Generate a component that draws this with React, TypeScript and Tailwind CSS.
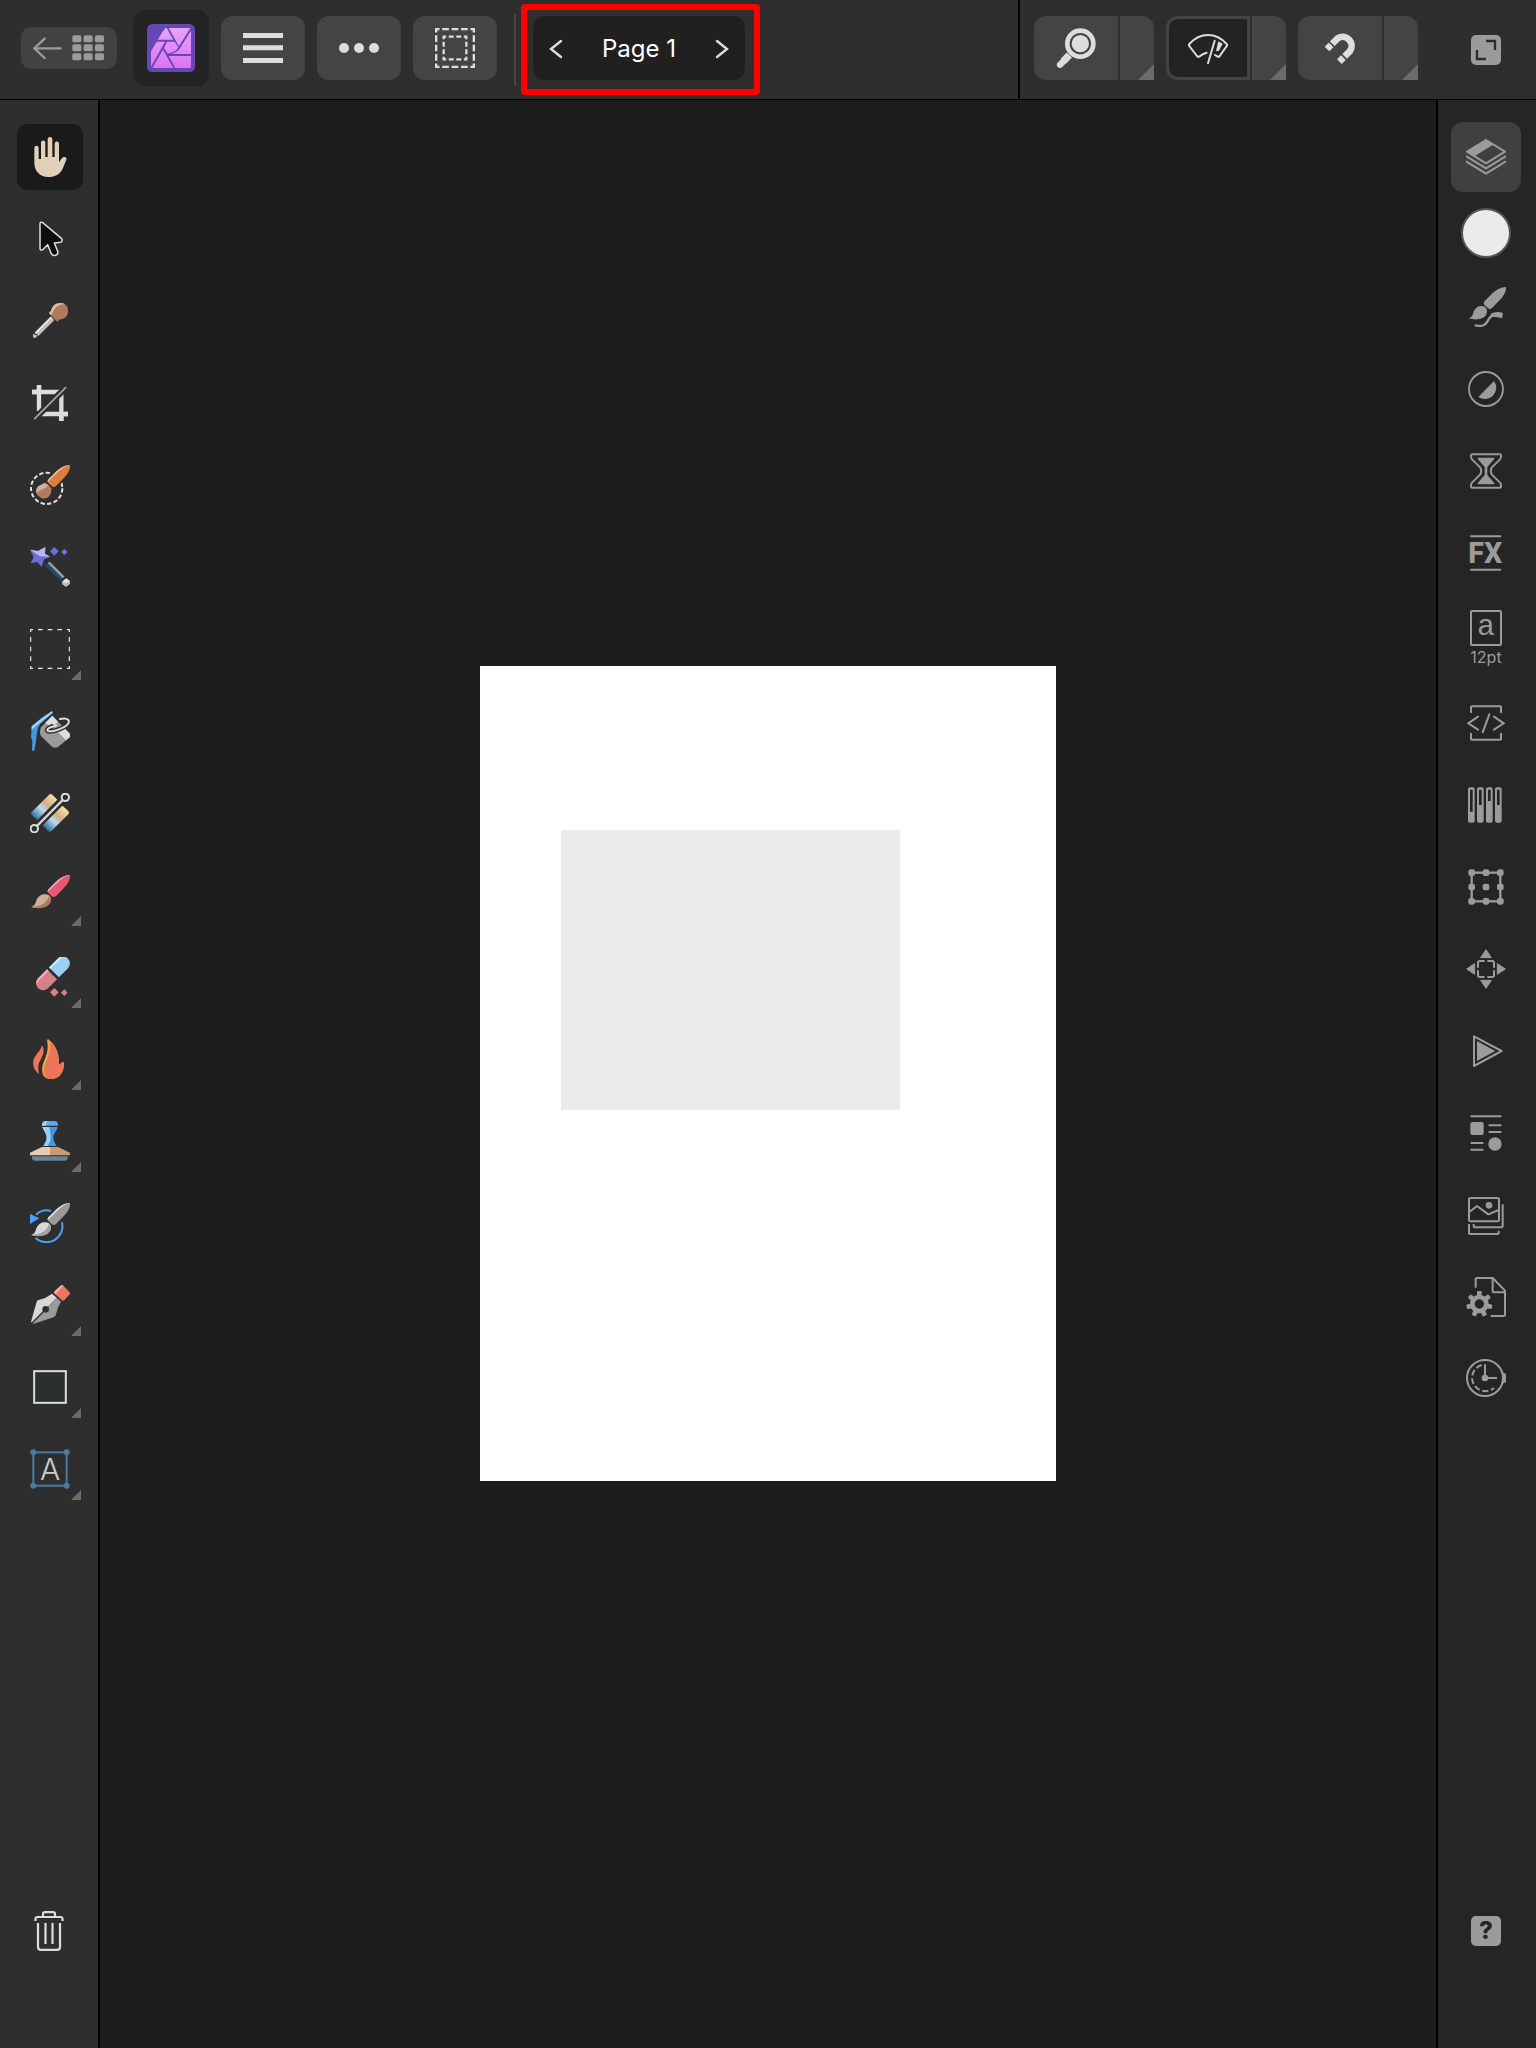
import { useState, type ReactNode } from 'react';
import clsx from 'clsx';

interface IconItem {
  id: string;
  label: string;
  icon: ReactNode;
  more?: boolean;
}

// all icons are drawn on a 120 unit grid and shown at 40px
function Icon({ children, className = 'w-10 h-10' }: { children: ReactNode; className?: string }) {
  return (
    <svg viewBox="0 0 120 120" className={className} fill="none" aria-hidden="true">
      {children}
    </svg>
  );
}

const HANDLE = 'M120 0C105 0 90 8 72 26L56 42Q50 49 56 55L66 64Q72 69 78 63L98 43C114 27 121 14 120 0Z';
const HANDLE_LIGHT = 'M120 0C105 0 90 8 72 26L56 42Q51 47 53 52L76 29C92 13 104 4 120 0Z';
const BRISTLE = 'M5 95Q15 92 17 82Q22 62 40 58Q56 55 62 67Q65 84 50 94Q32 103 5 97Z';

const TOOLS: IconItem[] = [
  {
    id: 'hand',
    label: 'View tool',
    icon: (
      <Icon>
        <path
          fill="#e3cfb9"
          d="M13 33a6.5 6.5 0 0 1 13 0V66h7V17a6.5 6.5 0 0 1 13 0V60h7V7a7 7 0 0 1 14 0V60h7V20a6.5 6.5 0 0 1 13 0V76l9-12c5-7 16-4 13 4L98 95c-8 16-22 25-43 25C30 120 13 104 13 76Z"
        />
      </Icon>
    ),
  },
  {
    id: 'move',
    label: 'Move tool',
    icon: (
      <Icon>
        <path
          fill="#0d0d0d"
          stroke="#dddddd"
          strokeWidth="4.5"
          strokeLinejoin="round"
          d="M38 11Q31 7 30 14V88Q31 96 38 92L53 77L64 104Q68 112 77 109Q86 105 83 97L73 72L92 70Q99 66 95 59Z"
        />
      </Icon>
    ),
  },
  {
    id: 'picker',
    label: 'Colour picker',
    icon: (
      <Icon>
        <path stroke="#bdbdbd" strokeWidth="15" d="M68 52L20 100" />
        <path stroke="#e6e6e6" strokeWidth="6" d="M64 49L16 97" />
        <path fill="#bdbdbd" d="M9 98L23 104L17 110Q12 113 9 108Z" />
        <path fill="#b07a5e" d="M58 38Q57 32 63 30Q68 8 88 6C104 4 116 16 114 32C113 46 104 54 90 55L82 62Z" />
        <path fill="#e0bda9" d="M58 38Q57 32 63 30Q68 8 88 6Q98 5 105 10Q84 10 76 22Q68 30 68 36L62 42Z" />
      </Icon>
    ),
  },
  {
    id: 'crop',
    label: 'Crop tool',
    icon: (
      <Icon>
        <path stroke="#dddddd" strokeWidth="13" d="M27 6V84M6 27H90M94 30V114M30 93H114" />
        <path stroke="#2e2e2e" strokeWidth="19" d="M8 113L113 8" />
        <path stroke="#dddddd" strokeWidth="13" d="M6 27H32M27 6V32M94 88V114M88 93H114" />
        <path stroke="#a6a6a6" strokeWidth="5" strokeLinecap="round" d="M14 107L107 14" />
      </Icon>
    ),
  },
  {
    id: 'selection-brush',
    label: 'Selection brush',
    icon: (
      <Icon>
        <circle cx="50" cy="70" r="47" stroke="#e2e2e2" strokeWidth="6" strokeDasharray="13 6.7" />
        <path stroke="#2e2e2e" strokeWidth="10" fill="#2e2e2e" d={HANDLE} />
        <path fill="#d97f42" d={HANDLE} />
        <path fill="#f3bb94" d={HANDLE_LIGHT} />
        <path fill="#b07a5e" d="M44 54Q57 58 65 71L62 86Q54 104 36 100Q18 92 18 78Q18 66 28 62Z" />
        <path fill="#cfae9c" d="M44 54L54 59Q52 68 38 73Q24 78 20 86Q16 68 28 62Z" />
      </Icon>
    ),
  },
  {
    id: 'wand',
    label: 'Flood select',
    icon: (
      <Icon>
        <path fill="#6a70d8" d="M46 0L45 20L60 29L42 37L35 60L22 45L2 49L11 30L0 8L24 12Z" />
        <path fill="#b6b8ef" d="M46 0L45 20L60 29L30 28L0 8L24 12Z" />
        <path fill="#6a70d8" d="M73 0L86 13L73 26L60 13ZM103 5L113 15L103 25L93 15Z" />
        <path stroke="#28495b" strokeWidth="16" d="M51 50L97 96" />
        <path stroke="#8fa1ab" strokeWidth="7" d="M56 46L101 91" />
        <path fill="#e4e4e4" d="M108 94L118 100Q121 108 118 112L108 119L98 112Q95 106 98 103Z" />
        <path fill="#bcbcbc" d="M97 104L108 108L118 101Q121 108 118 112L108 119L98 112Z" />
      </Icon>
    ),
  },
  {
    id: 'marquee',
    label: 'Rectangular marquee',
    more: true,
    icon: (
      <Icon>
        <rect x="2" y="2" width="116" height="116" stroke="#e8e8e8" strokeWidth="3.5" strokeDasharray="14 15" strokeDashoffset="7" />
      </Icon>
    ),
  },
  {
    id: 'fill',
    label: 'Flood fill',
    icon: (
      <Icon>
        <path fill="#4596dc" d="M66 1L68 5L30 40Q22 50 21 66L14 117Q10 122 6 118L7 88L3 80L5 46Z" />
        <path fill="#9ad0f4" d="M66 0L68 6L30 36L10 52L5 58V46L36 20Z" />
        <path fill="#9b9b9b" d="M67 14L120 70V78L84 108Q75 113 66 107L33 75Q29 70 30 62L32 50Z" />
        <path fill="#dddddd" d="M67 14L84 32L65 51L46 35ZM98 46L120 68V78L108 88L83 62Z" />
        <path stroke="#2e2e2e" strokeWidth="14" strokeLinecap="round" d="M66 46C44 54 48 66 74 59C104 51 122 38 115 27C109 20 98 22 90 24" />
        <path stroke="#dddddd" strokeWidth="6" strokeLinecap="round" d="M78 44C40 52 48 66 74 59C104 51 122 38 115 27C109 20 98 22 90 24" />
      </Icon>
    ),
  },
  {
    id: 'gradient',
    label: 'Gradient tool',
    icon: (
      <Icon>
        <defs>
          <linearGradient id="grad-a" x1="72" y1="10" x2="12" y2="72" gradientUnits="userSpaceOnUse">
            <stop offset="0" stopColor="#f0e4a2" />
            <stop offset=".38" stopColor="#d8ab8a" />
            <stop offset=".62" stopColor="#b6dcf4" />
            <stop offset="1" stopColor="#3a7092" />
          </linearGradient>
          <linearGradient id="grad-b" x1="107" y1="48" x2="48" y2="106" gradientUnits="userSpaceOnUse">
            <stop offset="0" stopColor="#f0e4a2" />
            <stop offset=".38" stopColor="#d8ab8a" />
            <stop offset=".62" stopColor="#b6dcf4" />
            <stop offset="1" stopColor="#3a7092" />
          </linearGradient>
        </defs>
        <path fill="url(#grad-a)" d="M59 4Q63 1 67 5L82 20L22 81L5 65Q1 61 5 57Z" />
        <path fill="url(#grad-b)" d="M97 38L115 54Q119 59 115 64L64 114Q59 119 54 114L38 97Z" />
        <path stroke="#dddddd" strokeWidth="7" d="M21 99L98 21" />
        <circle cx="106" cy="13" r="11" stroke="#dddddd" strokeWidth="6" />
        <circle cx="13" cy="107" r="11" stroke="#dddddd" strokeWidth="6" />
      </Icon>
    ),
  },
  {
    id: 'brush',
    label: 'Paint brush',
    more: true,
    icon: (
      <Icon>
        <path fill="#e95873" d={HANDLE} />
        <path fill="#f4a6b2" d={HANDLE_LIGHT} />
        <path fill="#cfae9c" d={BRISTLE} />
        <path fill="#b07a5e" d="M5 95Q48 94 57 62Q62 64 63 74Q62 86 50 94Q32 103 5 97Z" />
      </Icon>
    ),
  },
  {
    id: 'erase',
    label: 'Erase brush',
    more: true,
    icon: (
      <Icon>
        <g transform="translate(69 49) rotate(-45)">
          <path fill="#9bcff5" d="M4 -21H42A21 21 0 0 1 42 21H4Z" />
          <path fill="#d3edfd" d="M4 -21H42Q54 -20 60 -12Q54 -15 44 -15H4Z" />
          <path fill="#d97f87" d="M-4 -21H-42A21 21 0 0 0 -42 21H-4Z" />
          <path fill="#f0b5ba" d="M-4 -21H-42Q-54 -20 -60 -12Q-54 -15 -44 -15H-4Z" />
        </g>
        <path fill="#d97f87" d="M73 93L86 106L73 119L60 106ZM103 97L113 107L103 117L93 107Z" />
      </Icon>
    ),
  },
  {
    id: 'burn',
    label: 'Burn brush',
    more: true,
    icon: (
      <Icon>
        <path fill="#ee745c" d="M38 21C48 44 30 60 26 76C23 88 27 96 26 105C12 92 8 80 10 66C14 46 30 40 35 22Z" />
        <path fill="#f0a24a" d="M54 0C70 12 88 32 87 76C92 76 92 70 102 69C103 98 90 120 62 120C40 120 34 104 37 82C42 60 59 40 51 4Z" />
        <path fill="#ee745c" d="M60 5C76 20 88 40 87 76C92 76 92 70 102 69C103 98 90 120 62 120C46 119 40 104 43 84C48 62 66 40 60 5Z" />
      </Icon>
    ),
  },
  {
    id: 'clone',
    label: 'Clone brush',
    more: true,
    icon: (
      <Icon>
        <path fill="#54adf2" d="M36 14V8Q38 0 46 0H74Q82 0 84 8V14Z" />
        <path fill="#4596dc" d="M37 18H83C82 28 70 38 70 50C70 60 76 66 80 75H40C44 66 50 60 50 50C50 38 40 28 37 18Z" />
        <path fill="#9ad0f4" d="M37 18H58C60 30 62 38 62 50C62 60 58 66 52 75H40C44 66 50 60 50 50C50 38 40 28 37 18ZM36 14V8Q38 0 46 0L52 1L48 14Z" />
        <path fill="#e5cbb2" d="M36 78H60V103H0V95Z" />
        <path fill="#c89c72" d="M60 78H84L120 95V103H60Z" />
        <path fill="#66859a" d="M6 106H113V112Q112 119 105 119H14Q7 119 6 112Z" />
      </Icon>
    ),
  },
  {
    id: 'undo-brush',
    label: 'Undo brush',
    icon: (
      <Icon>
        <path stroke="#4ba0f5" strokeWidth="6" d="M63 24A48 48 0 0 0 18 35M96 58A48 48 0 0 1 16 104" />
        <path fill="#4ba0f5" d="M0 33L28 46L0 63Z" />
        <path fill="#999999" d={HANDLE} />
        <path fill="#dddddd" d={HANDLE_LIGHT} />
        <path fill="#d8d8d8" d={BRISTLE} />
        <path fill="#a2a2a2" d="M5 95Q48 94 57 62Q62 64 63 74Q62 86 50 94Q32 103 5 97Z" />
      </Icon>
    ),
  },
  {
    id: 'pen',
    label: 'Pen tool',
    more: true,
    icon: (
      <Icon>
        <path fill="#d8d8d8" d="M3 110L20 50Q21 46 26 45Q48 40 66 26L80 38L6 113Z" />
        <path fill="#9b9b9b" d="M80 38L93 50Q82 68 78 88Q77 94 71 97L9 117L6 113Z" />
        <path stroke="#2e2e2e" strokeWidth="4" d="M4 116L47 73" />
        <circle cx="47" cy="73" r="10" fill="#2e2e2e" />
        <path fill="#ef745f" d="M92 2Q96 -2 100 2L118 21Q122 25 118 29L103 45Q99 49 95 45L74 26Q71 22 74 19Z" />
        <path fill="#f7b3a6" d="M92 2Q96 -2 100 2L77 28L74 26Q71 22 74 19Z" />
      </Icon>
    ),
  },
  {
    id: 'rectangle',
    label: 'Rectangle tool',
    more: true,
    icon: (
      <Icon>
        <rect x="12.5" y="12.5" width="95" height="95" fill="#2a302f" stroke="#dddddd" strokeWidth="6" />
      </Icon>
    ),
  },
  {
    id: 'text',
    label: 'Frame text tool',
    more: true,
    icon: (
      <Icon>
        <rect x="10" y="10" width="100" height="100" stroke="#4a7ba1" strokeWidth="6" />
        <g fill="#4a7ba1">
          <circle cx="10" cy="10" r="9" />
          <circle cx="110" cy="10" r="9" />
          <circle cx="10" cy="110" r="9" />
          <circle cx="110" cy="110" r="9" />
        </g>
        <text x="60" y="93" textAnchor="middle" fill="#cccccc" fontSize="90" fontWeight="300" fontFamily="Inter, sans-serif">
          A
        </text>
      </Icon>
    ),
  },
];

const GEAR_TEETH = [0, 51.4, 102.9, 154.3, 205.7, 257.1, 308.6];

const STUDIOS: IconItem[] = [
  {
    id: 'brushes',
    label: 'Brushes',
    icon: (
      <Icon>
        <path fill="#9b9b9b" d={HANDLE} />
        <path fill="#9b9b9b" d="M8 94Q18 91 21 80Q26 60 43 57Q58 55 63 68Q65 84 50 93Q32 101 8 94Z" />
        <path stroke="#9b9b9b" strokeWidth="7" strokeLinecap="round" d="M29 115C50 121 60 114 67 98C74 84 86 84 104 86" />
        <path fill="#9b9b9b" d="M74 80Q92 71 111 78L108 94Q92 88 74 90Z" />
      </Icon>
    ),
  },
  {
    id: 'adjustments',
    label: 'Adjustments',
    icon: (
      <Icon>
        <circle cx="60" cy="60" r="51" stroke="#9b9b9b" strokeWidth="5.5" />
        <path fill="#9b9b9b" d="M84 36A34 34 0 0 1 37 84Z" />
      </Icon>
    ),
  },
  {
    id: 'filters',
    label: 'Filters',
    icon: (
      <Icon>
        <path
          stroke="#98989d"
          strokeWidth="6"
          strokeLinejoin="round"
          d="M19 10H101Q106 10 105 16Q105 22 102 25L77 50Q72 60 77 70L102 95Q105 98 105 104Q106 110 101 110H19Q14 110 15 104Q15 98 18 95L43 70Q48 60 43 50L18 25Q15 22 15 16Q14 10 19 10Z"
        />
        <path fill="#98989d" d="M35 20H85V24L64 48V72L85 96V100H35V96L56 72V48L35 24Z" />
      </Icon>
    ),
  },
  {
    id: 'fx',
    label: 'Layer FX',
    icon: (
      <Icon>
        <path stroke="#9b9b9b" strokeWidth="6" strokeLinecap="round" d="M15 10H103M15 110H103" />
        <text x="58" y="91" textAnchor="middle" fill="#9b9b9b" fontSize="86" fontWeight="800" fontFamily="'Liberation Sans Narrow', Roboto, sans-serif">
          FX
        </text>
      </Icon>
    ),
  },
  {
    id: 'typography',
    label: 'Text',
    icon: null,
  },
  {
    id: 'export',
    label: 'Metadata',
    icon: (
      <Icon>
        <path
          stroke="#9b9b9b"
          strokeWidth="6"
          strokeLinecap="round"
          d="M15 28V13Q15 10 18 10H102Q105 10 105 13V28M15 92V107Q15 110 18 110H102Q105 110 105 107V92M36 41L7 61L36 80M84 41L113 61L84 80M70 34L50 88"
        />
      </Icon>
    ),
  },
  {
    id: 'channels',
    label: 'Channels',
    icon: (
      <Icon>
        <path
          fill="#9b9b9b"
          fillRule="evenodd"
          d="M12 7H20Q26 7 26 13V107Q26 113 20 113H12Q6 113 6 107V13Q6 7 12 7ZM12 14V80H20V14ZM39 7H47Q53 7 53 13V107Q53 113 47 113H39Q33 113 33 107V13Q33 7 39 7ZM39 14V60H47V14ZM66 7H74Q80 7 80 13V107Q80 113 74 113H66Q60 113 60 107V13Q60 7 66 7ZM66 14V48H74V14ZM93 7H101Q107 7 107 13V107Q107 113 101 113H93Q87 113 87 107V13Q87 7 93 7ZM93 14V60H101V14Z"
        />
      </Icon>
    ),
  },
  {
    id: 'transform',
    label: 'Transform',
    icon: (
      <Icon>
        <rect x="17" y="17" width="86" height="86" stroke="#9b9b9b" strokeWidth="7" />
        <g fill="#9b9b9b">
          {[17, 60, 103].map(y => [17, 60, 103].map(x => (
            <rect key={`${x}-${y}`} x={x - 10} y={y - 10} width="20" height="20" rx="7" />
          )))}
        </g>
      </Icon>
    ),
  },
  {
    id: 'navigator',
    label: 'Navigator',
    icon: (
      <Icon>
        <g fill="#9b9b9b" stroke="#9b9b9b" strokeWidth="3" strokeLinejoin="round">
          <path d="M60 2L76 26H44ZM60 118L76 94H44ZM2 60L26 44V76ZM118 60L94 44V76Z" />
        </g>
        <path stroke="#9b9b9b" strokeWidth="6" d="M56 36H41Q36 36 36 41V56M64 36H79Q84 36 84 41V56M56 84H41Q36 84 36 79V64M64 84H79Q84 84 84 79V64" />
      </Icon>
    ),
  },
  {
    id: 'macros',
    label: 'Macros',
    icon: (
      <Icon>
        <path stroke="#9b9b9b" strokeWidth="6" strokeLinejoin="round" d="M24 16L107 60L24 105Z" />
        <path fill="#9b9b9b" d="M33 30L88 60L33 90Z" />
      </Icon>
    ),
  },
  {
    id: 'layout',
    label: 'Text styles',
    icon: (
      <Icon>
        <path stroke="#9b9b9b" strokeWidth="6" strokeLinecap="round" d="M16 10H104M70 37H104M70 57H104M16 90H50M16 110H50" />
        <rect x="13" y="27" width="40" height="39" rx="6" fill="#9b9b9b" />
        <circle cx="87" cy="93" r="20" fill="#9b9b9b" />
      </Icon>
    ),
  },
  {
    id: 'stock',
    label: 'Stock',
    icon: (
      <Icon>
        <g stroke="#9b9b9b" strokeWidth="6" strokeLinejoin="round">
          <rect x="9" y="9" width="90" height="70" rx="4" />
          <path d="M10 51L33 33L67 58L98 45M23 87V94Q23 97 26 97H107Q110 97 110 94V28M9 87V114Q9 117 12 117H95Q98 117 98 114V107" />
        </g>
        <circle cx="69" cy="31" r="10" fill="#9b9b9b" />
      </Icon>
    ),
  },
  {
    id: 'document',
    label: 'Document',
    icon: (
      <Icon>
        <path stroke="#9b9b9b" strokeWidth="6" strokeLinejoin="round" d="M29 32V7Q29 3 33 3H80L117 41V114Q117 117 113 117H74M80 3V42Q80 46 84 46H117" />
        <circle cx="40" cy="81" r="21" stroke="#9b9b9b" strokeWidth="14" />
        <g fill="#9b9b9b">
          {GEAR_TEETH.map(a => (
            <rect key={a} x="33" y="42" width="14" height="16" rx="3" transform={`rotate(${a} 40 81)`} />
          ))}
        </g>
      </Icon>
    ),
  },
  {
    id: 'history',
    label: 'History',
    icon: (
      <Icon>
        <circle cx="57" cy="57" r="54" stroke="#9b9b9b" strokeWidth="6" />
        <path stroke="#9b9b9b" strokeWidth="6" d="M57 16V57H93" />
        <circle cx="57" cy="57" r="10" fill="#9b9b9b" />
        <path stroke="#9b9b9b" strokeWidth="6" strokeDasharray="18 8" d="M47 18A40 40 0 1 0 84 87" />
        <path fill="#9b9b9b" d="M109 41H114Q120 43 120 48V66Q120 71 114 73H109Z" />
      </Icon>
    ),
  },
];

function SplitButton({ label, active, children }: { label: string; active?: boolean; children: ReactNode }) {
  return (
    <div className="flex gap-0.5 h-16">
      <button
        aria-label={label}
        className={clsx(
          'w-[84px] rounded-l-xl flex items-center justify-center',
          active ? 'bg-[#232323] border-3 border-[#444444]' : 'bg-[#444444]',
        )}
      >
        {children}
      </button>
      <button aria-label={`${label} options`} className="w-[34px] bg-[#444444] rounded-tr-xl flex items-end justify-end">
        <svg viewBox="0 0 16 16" className="w-4 h-4" aria-hidden="true">
          <path d="M16 0V16H0Z" fill="#6b6b6b" />
        </svg>
      </button>
    </div>
  );
}

function TopBar({ page, onPage }: { page: number; onPage: (p: number) => void }) {
  return (
    <header className="h-[100px] bg-[#2e2e2e] border-b border-black flex items-center">
      <div className="flex items-center gap-3 pl-[21px] pb-[3px]">
        <button aria-label="Back to documents" className="w-24 h-[42px] mr-1 rounded-[10px] bg-[#424242] flex items-center justify-center">
          <svg viewBox="0 0 216 78" className="w-[72px] h-[26px]" fill="none" aria-hidden="true">
            <path stroke="#9b9b9b" strokeWidth="7" strokeLinecap="round" strokeLinejoin="round" d="M83 40H5M35 11L4 40L35 69" />
            <g fill="#9b9b9b">
              {[1, 28, 55].map(y => [118, 152, 186].map(x => (
                <rect key={`${x}-${y}`} x={x} y={y} width="27" height="21" rx="5" />
              )))}
            </g>
          </svg>
        </button>
        <button aria-label="Persona" className="w-[76px] h-[76px] rounded-xl bg-[#232323] flex items-center justify-center">
          <svg viewBox="0 0 144 144" className="w-12 h-12" aria-hidden="true">
            <defs>
              <linearGradient id="logo-pink" x1="0" y1="12" x2="0" y2="132" gradientUnits="userSpaceOnUse">
                <stop offset="0" stopColor="#eba2f8" />
                <stop offset="1" stopColor="#da74f6" />
              </linearGradient>
            </defs>
            <rect width="144" height="144" rx="16" fill="#6746b5" />
            <g fill="url(#logo-pink)">
              <path d="M55 12H59L79 47H32Q44 26 55 12Z" />
              <path d="M65 12H130L96 67Z" />
              <path d="M132 20V90H73Q92 84 100 71Z" />
              <path d="M65 96H132V127Q132 132 127 132H85Z" />
              <path d="M48 77L79 132H16Z" />
              <path d="M29 53H54L12 128V82Z" />
              <path d="M60 53H83L94 70Q88 84 62 89L51 72Z" />
            </g>
          </svg>
        </button>
        <button aria-label="Document menu" className="w-[84px] h-16 rounded-xl bg-[#444444] flex items-center justify-center">
          <Icon>
            <path fill="#dddddd" d="M0 15H120V30H0ZM0 52H120V67H0ZM0 90H120V105H0Z" />
          </Icon>
        </button>
        <button aria-label="Edit menu" className="w-[84px] h-16 rounded-xl bg-[#444444] flex items-center justify-center">
          <Icon>
            <g fill="#dddddd">
              <circle cx="15" cy="60" r="15" />
              <circle cx="60" cy="60" r="15" />
              <circle cx="105" cy="60" r="15" />
            </g>
          </Icon>
        </button>
        <button aria-label="Selections" className="w-[84px] h-16 rounded-xl bg-[#444444] flex items-center justify-center">
          <Icon>
            <g stroke="#dddddd" strokeWidth="7">
              <rect x="3.5" y="3.5" width="113" height="113" strokeDasharray="20 8.25" strokeDashoffset="10" />
              <rect x="26" y="26" width="68" height="68" strokeDasharray="15 7.66" strokeDashoffset="7.5" />
            </g>
          </Icon>
        </button>
      </div>

      <div className="w-0.5 h-[72px] bg-[#444444] ml-[17px]" />

      <div className="ml-[5px] border-6 border-[#ff0000] rounded-sm pt-1.5 pl-1.5 pr-[9px] pb-[9px]">
        <nav className="w-[212px] h-16 pt-0.5 px-4 rounded-xl bg-[#202020] text-[#dddddd] flex items-center justify-between">
          <button aria-label="Previous page" onClick={() => onPage(Math.max(1, page - 1))}>
            <svg viewBox="0 0 14 20" className="w-3.5 h-5" fill="none" stroke="currentColor" strokeWidth="2.4" strokeLinecap="round" aria-hidden="true">
              <path d="M12 2L2 10L12 18" />
            </svg>
          </button>
          <span className="text-2xl text-white font-['Inter',sans-serif]">Page {page}</span>
          <button aria-label="Next page" onClick={() => onPage(page + 1)}>
            <svg viewBox="0 0 14 20" className="w-3.5 h-5" fill="none" stroke="currentColor" strokeWidth="2.4" strokeLinecap="round" aria-hidden="true">
              <path d="M2 2L12 10L2 18" />
            </svg>
          </button>
        </nav>
      </div>

      <div className="ml-auto self-stretch border-l-2 border-black pl-3.5 pr-[35px] flex items-center">
        <div className="flex gap-3 pb-[3px]">
          <SplitButton label="Zoom">
            <Icon>
              <circle cx="73" cy="47" r="39" stroke="#dddddd" strokeWidth="14" />
              <circle cx="73" cy="47" r="26" fill="#dddddd" />
              <path stroke="#dddddd" strokeWidth="22" d="M40 81L22 100" />
              <path stroke="#dddddd" strokeWidth="19" strokeLinecap="round" d="M24 98L12 110" />
            </Icon>
          </SplitButton>
          <SplitButton label="Clean view" active>
            <Icon>
              <g stroke="#dddddd" strokeWidth="6" strokeLinecap="round" strokeLinejoin="round">
                <path d="M56 74Q44 77 33 86Q29 88 27 84L3 53Q2 50 4 48Q28 21 60 21Q92 21 116 48Q118 50 117 53L95 84Q93 88 89 86L81 81" />
                <path d="M80 38L60 106" />
              </g>
              <path fill="#dddddd" d="M91 40L104 47L93 68L84 70Z" />
            </Icon>
          </SplitButton>
          <SplitButton label="Snapping">
            <Icon>
              <path stroke="#dddddd" strokeWidth="20" d="M21 63L53 31A27 27 0 0 1 90 69L58 101" />
              <path stroke="#444444" strokeWidth="5" d="M25 39L45 59M62 77L82 97" />
            </Icon>
          </SplitButton>
        </div>
        <button aria-label="Full screen" className="ml-[53px]">
          <svg viewBox="0 0 30 30" className="w-[30px] h-[30px]" fill="none" aria-hidden="true">
            <rect width="30" height="30" rx="5" fill="#9b9b9b" />
            <path stroke="#2e2e2e" strokeWidth="2.4" d="M15 6H24V15M6 15V24H15" />
          </svg>
        </button>
      </div>
    </header>
  );
}

export default function App() {
  const [tool, setTool] = useState('hand');
  const [page, setPage] = useState(1);

  return (
    <div className="min-h-screen flex flex-col bg-[#1c1c1c]">
      <TopBar page={page} onPage={setPage} />

      <div className="flex-1 flex">
        <aside className="w-[100px] bg-[#2e2e2e] border-r-2 border-black pt-6 pb-[84px] pl-[17px] flex flex-col gap-4">
          {TOOLS.map(t => (
            <button
              key={t.id}
              aria-label={t.label}
              onClick={() => setTool(t.id)}
              className={clsx(
                'relative w-[66px] h-[66px] rounded-[10px] flex items-center justify-center',
                tool === t.id && 'bg-[#1a1a1a]',
              )}
            >
              {t.icon}
              {t.more && (
                <svg viewBox="0 0 10 10" className="absolute right-0.5 bottom-0.5 w-2.5 h-2.5" aria-hidden="true">
                  <path d="M10 0V10H0Z" fill="#6b6b6b" />
                </svg>
              )}
            </button>
          ))}
          <button aria-label="Delete" className="mt-auto w-16 h-[66px] flex items-center justify-center">
            <svg viewBox="0 0 40 40" className="w-10 h-10" fill="none" stroke="#dddddd" strokeWidth="2.2" aria-hidden="true">
              <path d="M14 6V3Q14 1.200 16 1.200H24Q26 1.200 26 3V6M6.500 10V8Q6.500 6 8.500 6H31.500Q33.500 6 33.500 8V10M9 12V36Q9 38.800 12 38.800H28Q31 38.800 31 36V12M16.500 12V33M23.500 12V33" />
            </svg>
          </button>
        </aside>

        <main className="flex-1 flex items-center justify-center pb-0.5">
          <div className="w-[576px] h-[815px] bg-white pt-[164px] pl-[81px]">
            <div className="w-[339px] h-[280px] bg-[#ebebeb]" />
          </div>
        </main>

        <aside className="w-[100px] bg-[#252525] border-l-2 border-black pt-[22px] pb-[84px] pr-0.5 flex flex-col items-center gap-4">
          <button aria-label="Layers" className="w-[70px] h-[70px] rounded-xl bg-[#404040] flex items-center justify-center">
            <Icon>
              <g stroke="#9b9b9b" strokeWidth="6" strokeLinejoin="round">
                <path d="M60 9L117 44L60 79L3 44Z" />
                <path d="M0 57L60 94L120 57M0 73L60 110L120 73" />
              </g>
              <path fill="#9b9b9b" d="M60 7L84 22L25 58L2 44Z" />
            </Icon>
          </button>
          <button aria-label="Colour" className="w-[50px] h-[50px] rounded-full bg-[#ebebeb] border-2 border-[#555555]" />
          {STUDIOS.map(s =>
            s.id === 'typography' ? (
              <button key={s.id} aria-label={s.label} className="h-[72px] pt-2 flex flex-col items-center font-['Inter',sans-serif] text-[#9b9b9b]">
                <span className="w-8 h-9 border-2 border-[#9b9b9b] rounded-xs flex items-center justify-center text-3xl leading-7 pb-0.5 font-['Liberation_Mono',monospace]">
                  a
                </span>
                <span className="text-base leading-[22px]">12pt</span>
              </button>
            ) : (
              <button key={s.id} aria-label={s.label} className="w-[66px] h-[66px] flex items-center justify-center">
                {s.icon}
              </button>
            ),
          )}
          <button aria-label="Help" className="mt-auto h-[66px] flex items-center">
            <span className="w-[30px] h-[30px] rounded-[5px] bg-[#9b9b9b] text-[#252525] text-2xl leading-none font-extrabold font-['Inter',sans-serif] flex items-center justify-center">
              ?
            </span>
          </button>
        </aside>
      </div>
    </div>
  );
}
